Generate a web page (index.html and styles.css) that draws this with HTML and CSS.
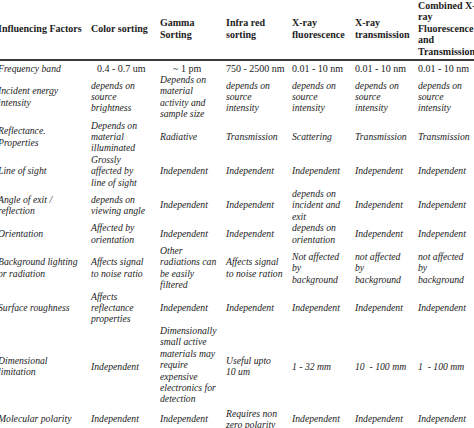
FILE: index.html
```html
<!DOCTYPE html>
<html lang="en">
<head>
<meta charset="utf-8">
<title>Influencing factors of sorting techniques</title>
<link rel="stylesheet" href="styles.css">
</head>
<body>
<table class="grid">
  <colgroup>
    <col class="w-factor">
    <col class="w-color">
    <col class="w-gamma">
    <col class="w-infra">
    <col class="w-xrf">
    <col class="w-xrt">
    <col class="w-comb">
  </colgroup>
  <thead>
    <tr>
      <th>Influencing Factors</th>
      <th>Color sorting</th>
      <th>Gamma<br>Sorting</th>
      <th>Infra red<br>sorting</th>
      <th>X-ray<br>fluorescence</th>
      <th>X-ray<br>transmission</th>
      <th>Combined X-<br>ray<br>Fluorescence<br>and<br>Transmission</th>
    </tr>
  </thead>
  <tbody>
    <tr class="first-row">
      <td>Frequency band</td>
      <td class="num indent-s">0.4 - 0.7 um</td>
      <td class="num indent-m">~ 1 pm</td>
      <td class="num">750 - 2500 nm</td>
      <td class="num">0.01 - 10 nm</td>
      <td class="num">0.01 - 10 nm</td>
      <td class="num">0.01 - 10 nm</td>
    </tr>
    <tr>
      <td>Incident energy<br>intensity</td>
      <td>depends on<br>source<br>brightness</td>
      <td>Depends on<br>material<br>activity and<br>sample size</td>
      <td>depends on<br>source<br>intensity</td>
      <td>depends on<br>source<br>intensity</td>
      <td>depends on<br>source<br>intensity</td>
      <td>depends on<br>source<br>intensity</td>
    </tr>
    <tr>
      <td>Reflectance.<br>Properties</td>
      <td>Depends on<br>material<br>illuminated</td>
      <td>Radiative</td>
      <td>Transmission</td>
      <td>Scattering</td>
      <td>Transmission</td>
      <td>Transmission</td>
    </tr>
    <tr>
      <td>Line of sight</td>
      <td>Grossly<br>affected by<br>line of sight</td>
      <td>Independent</td>
      <td>Independent</td>
      <td>Independent</td>
      <td>Independent</td>
      <td>Independent</td>
    </tr>
    <tr>
      <td>Angle of exit /<br>reflection</td>
      <td>depends on<br>viewing angle</td>
      <td>Independent</td>
      <td>Independent</td>
      <td>depends on<br>incident and<br>exit</td>
      <td>Independent</td>
      <td>Independent</td>
    </tr>
    <tr>
      <td>Orientation</td>
      <td>Affected by<br>orientation</td>
      <td>Independent</td>
      <td>Independent</td>
      <td>depends on<br>orientation</td>
      <td>Independent</td>
      <td>Independent</td>
    </tr>
    <tr>
      <td>Background lighting<br>or radiation</td>
      <td>Affects signal<br>to noise ratio</td>
      <td>Other<br>radiations can<br>be easily<br>filtered</td>
      <td>Affects signal<br>to noise ration</td>
      <td>Not affected<br>by<br>background</td>
      <td>not affected<br>by<br>background</td>
      <td>not affected<br>by<br>background</td>
    </tr>
    <tr>
      <td>Surface roughness</td>
      <td>Affects<br>reflectance<br>properties</td>
      <td>Independent</td>
      <td>Independent</td>
      <td>Independent</td>
      <td>Independent</td>
      <td>Independent</td>
    </tr>
    <tr>
      <td>Dimensional<br>limitation</td>
      <td>Independent</td>
      <td class="tall">Dimensionally<br>small active<br>materials may<br>require<br>expensive<br>electronics for<br>detection</td>
      <td>Useful upto<br>10 um</td>
      <td>1 - 32 mm</td>
      <td>10&nbsp; - 100 mm</td>
      <td>1&nbsp; - 100 mm</td>
    </tr>
    <tr>
      <td>Molecular polarity</td>
      <td>Independent</td>
      <td>Independent</td>
      <td>Requires non<br>zero polarity</td>
      <td>Independent</td>
      <td>Independent</td>
      <td>Independent</td>
    </tr>
  </tbody>
</table>
</body>
</html>
```

FILE: styles.css
```css
html,
body {
  margin: 0;
  padding: 0;
  background: #ffffff;
  overflow: hidden;
}

.grid {
  border-collapse: collapse;
  table-layout: fixed;
  width: 490px;
  margin-left: -2px;
  font-family: "Liberation Serif", "Times New Roman", serif;
  color: #1c1c1c;
}

.w-factor { width: 93px; }
.w-color  { width: 69px; }
.w-gamma  { width: 66px; }
.w-infra  { width: 66px; }
.w-xrf    { width: 63px; }
.w-xrt    { width: 63px; }
.w-comb   { width: 70px; }

.grid th {
  font-weight: bold;
  font-size: 10px;
  line-height: 11.4px;
  text-align: left;
  vertical-align: middle;
  white-space: nowrap;
  padding: 0 0 1.5px 0;
  border-bottom: 2px solid #3a3a3a;
}

.grid td {
  font-style: italic;
  font-size: 9.7px;
  line-height: 11.4px;
  text-align: left;
  vertical-align: middle;
  white-space: nowrap;
  padding: 0;
}

.grid .first-row td {
  padding-top: 2px;
}

.grid td.num {
  font-style: normal;
  font-size: 10px;
}

.grid td.indent-s {
  padding-left: 6px;
}

.grid td.indent-m {
  padding-left: 13px;
}

.grid td.tall {
  padding-bottom: 3px;
}
```
